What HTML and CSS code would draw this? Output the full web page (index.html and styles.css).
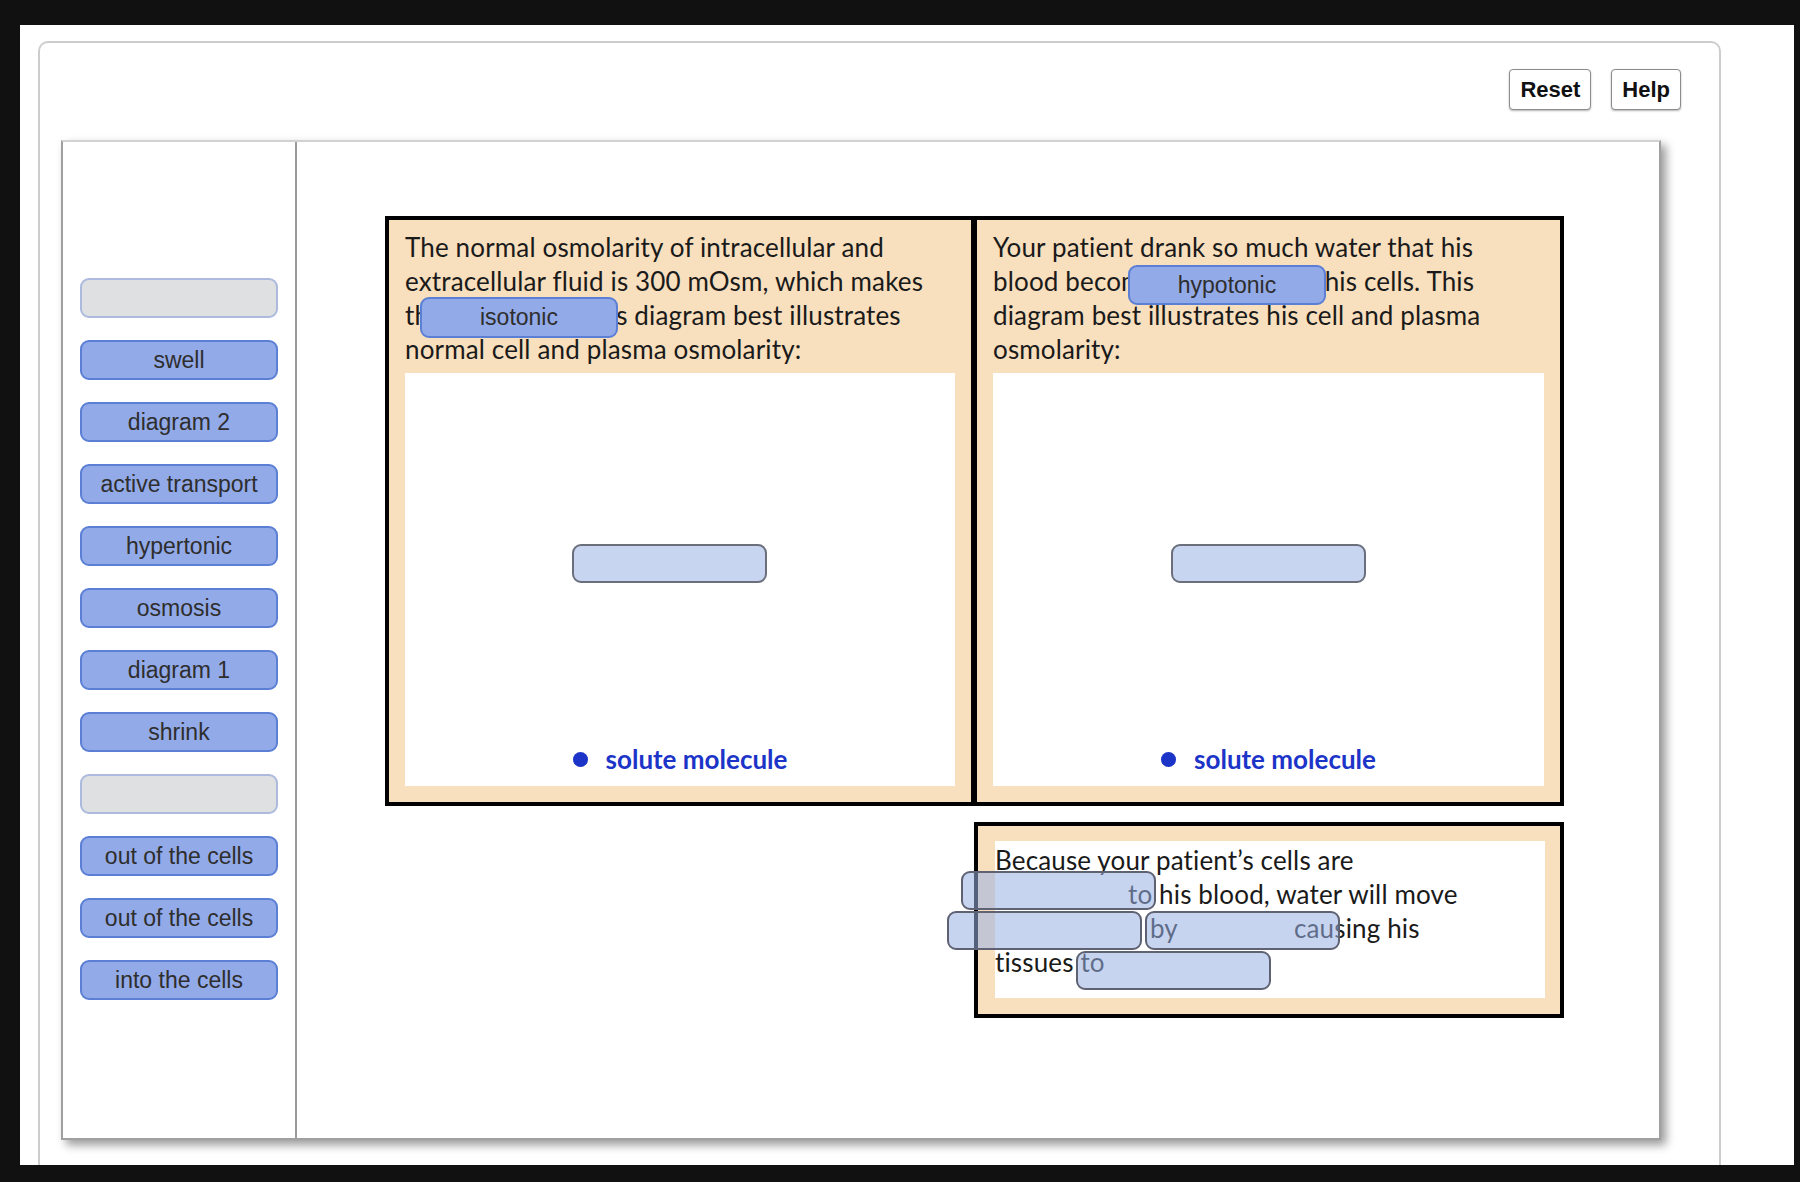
FILE: index.html
```html
<!DOCTYPE html>
<html lang="en">
<head>
    <meta charset="UTF-8">
    <meta name="viewport" content="width=device-width, initial-scale=1.0">
    <title>Osmolarity Activity</title>
    <link rel="stylesheet" href="styles.css">
</head>
<body>
    <div class="screen">
        <div class="activity">
            <div class="toolbar">
                <button class="tool-btn">Reset</button>
                <button class="tool-btn">Help</button>
            </div>

            <div class="workspace">
                <!-- answer bank -->
                <div class="bank">
                    <div class="chip empty"></div>
                    <div class="chip">swell</div>
                    <div class="chip">diagram 2</div>
                    <div class="chip">active transport</div>
                    <div class="chip">hypertonic</div>
                    <div class="chip">osmosis</div>
                    <div class="chip">diagram 1</div>
                    <div class="chip">shrink</div>
                    <div class="chip empty"></div>
                    <div class="chip">out of the cells</div>
                    <div class="chip">out of the cells</div>
                    <div class="chip">into the cells</div>
                </div>

                <div class="stage">
                    <div class="board">
                        <div class="question left">
                            <p class="prompt">The normal osmolarity of intracellular and<br>extracellular fluid is 300 mOsm, which makes<br>th<span class="gap gap-iso"></span>s diagram best illustrates<br>normal cell and plasma osmolarity:</p>
                            <div class="diagram">
                                <div class="target target-left"></div>
                                <div class="legend"><span class="dot"></span>solute molecule</div>
                            </div>
                            <div class="chip placed chip-iso">isotonic</div>
                        </div>

                        <div class="question right">
                            <p class="prompt">Your patient drank so much water that his<br>blood becom<span class="gap gap-hypo"></span>his cells. This<br>diagram best illustrates his cell and plasma<br>osmolarity:</p>
                            <div class="diagram">
                                <div class="target"></div>
                                <div class="legend"><span class="dot"></span>solute molecule</div>
                            </div>
                            <div class="chip placed chip-hypo">hypotonic</div>
                        </div>

                        <div class="result">
                            <p class="result-text">Because your patient’s cells are<br><span class="gap gap-a"></span>to his blood, water will move<br><span class="gap gap-b"></span>by<span class="gap gap-c"></span>causing his<br>tissues to</p>
                            <div class="slot slot-1"></div>
                            <div class="slot slot-2"></div>
                            <div class="slot slot-3"></div>
                            <div class="slot slot-4"></div>
                        </div>
                    </div>
                </div>
            </div>
        </div>
    </div>
</body>
</html>
```

FILE: styles.css
```css
body {
    margin: 0;
    background-color: #111;
    font-family: "Liberation Sans", Arial, sans-serif;
}

.screen {
    margin: 25px 0 0 20px;
    width: 1774px;
    height: 1140px;
    background-color: #fff;
    overflow: hidden;
}

.activity {
    margin: 16px 0 0 18px;
    width: 1683px;
    height: 1200px;
    box-sizing: border-box;
    border: 2px solid #cdcdcd;
    border-bottom: none;
    border-radius: 10px 10px 0 0;
}

.toolbar {
    display: flex;
    justify-content: flex-end;
    gap: 20px;
    padding: 26px 38px 0 0;
}

.tool-btn {
    height: 41px;
    padding: 0 10px;
    font-family: "Liberation Sans", Arial, sans-serif;
    font-size: 22px;
    font-weight: bold;
    color: #111;
    background-color: #fff;
    border: 1px solid #8c8c8c;
    border-radius: 4px;
    box-shadow: 0 1px 2px rgba(0, 0, 0, 0.3);
}

.workspace {
    display: flex;
    margin: 30px 0 0 21px;
    width: 1600px;
    height: 1000px;
    box-sizing: border-box;
    border: 2px solid #a0a0a0;
    border-top-color: #d2d2d2;
    box-shadow: 5px 5px 9px rgba(0, 0, 0, 0.4);
}

.bank {
    width: 234px;
    box-sizing: border-box;
    border-right: 2px solid #9a9a9a;
    padding: 136px 0 0 17px;
    display: flex;
    flex-direction: column;
    gap: 22px;
}

.chip {
    width: 198px;
    height: 40px;
    box-sizing: border-box;
    display: flex;
    align-items: center;
    justify-content: center;
    background-color: #93aae8;
    border: 2px solid #5b7fd4;
    border-radius: 9px;
    font-size: 23px;
    color: #2e2e2e;
}

.chip.empty {
    background-color: #dfe0e2;
    border-color: #abbadd;
}

.stage {
    flex: 1;
    padding: 74px 0 0 88px;
}

.board {
    display: grid;
    grid-template-columns: 589px 590px;
    grid-template-rows: 590px 196px;
    row-gap: 16px;
}

.question {
    position: relative;
    display: flex;
    flex-direction: column;
    box-sizing: border-box;
    padding: 10px 16px 16px 16px;
    background-color: #f8dfbe;
    border: 4px solid #000;
}

.question.left {
    border-right-width: 3px;
}

.question.right {
    border-left-width: 3px;
}

.prompt,
.result-text {
    margin: 0;
    font-family: Lato, "Liberation Sans", sans-serif;
    font-size: 26px;
    letter-spacing: 0.15px;
    line-height: 34px;
    color: #1a1a1a;
}

.gap {
    display: inline-block;
}

.gap-iso { width: 187px; }
.gap-hypo { width: 182px; }
.gap-a { width: 133px; }
.gap-b { width: 155px; }
.gap-c { width: 116px; }

.diagram {
    flex: 1;
    margin-top: 7px;
    display: flex;
    flex-direction: column;
    align-items: center;
    background-color: #fff;
}

.target {
    margin-top: 171px;
    width: 195px;
    height: 39px;
    box-sizing: border-box;
    background-color: #c8d5f1;
    border: 2px solid #6b6f7c;
    border-radius: 9px;
}

.target-left {
    margin-right: 22px;
}

.legend {
    margin-top: auto;
    margin-bottom: 12px;
    display: flex;
    align-items: center;
    gap: 18px;
    font-family: Lato, "Liberation Sans", sans-serif;
    font-size: 26px;
    font-weight: bold;
    line-height: 30px;
    color: #1c34c8;
}

.dot {
    width: 15px;
    height: 15px;
    border-radius: 50%;
    background-color: #1c34c8;
}

/* answers already dropped onto the prompts */
.chip.placed {
    position: absolute;
}

.chip-iso {
    left: 31px;
    top: 77px;
    height: 41px;
}

.chip-hypo {
    left: 151px;
    top: 45px;
}

.result {
    grid-column: 2;
    position: relative;
    box-sizing: border-box;
    padding: 15px 15px 16px 17px;
    background-color: #f8dfbe;
    border: 4px solid #000;
}

.result-text {
    height: 100%;
    box-sizing: border-box;
    padding: 2px 0 0 0;
    background-color: #fff;
}

/* open drop targets, see-through */
.slot {
    position: absolute;
    width: 195px;
    height: 39px;
    box-sizing: border-box;
    background-color: rgba(153, 177, 228, 0.55);
    border: 2px solid #5e6272;
    border-radius: 9px;
}

.slot-1 { left: -17px; top: 45px; }
.slot-2 { left: -31px; top: 85px; }
.slot-3 { left: 167px; top: 85px; }
.slot-4 { left: 98px; top: 125px; }
```
